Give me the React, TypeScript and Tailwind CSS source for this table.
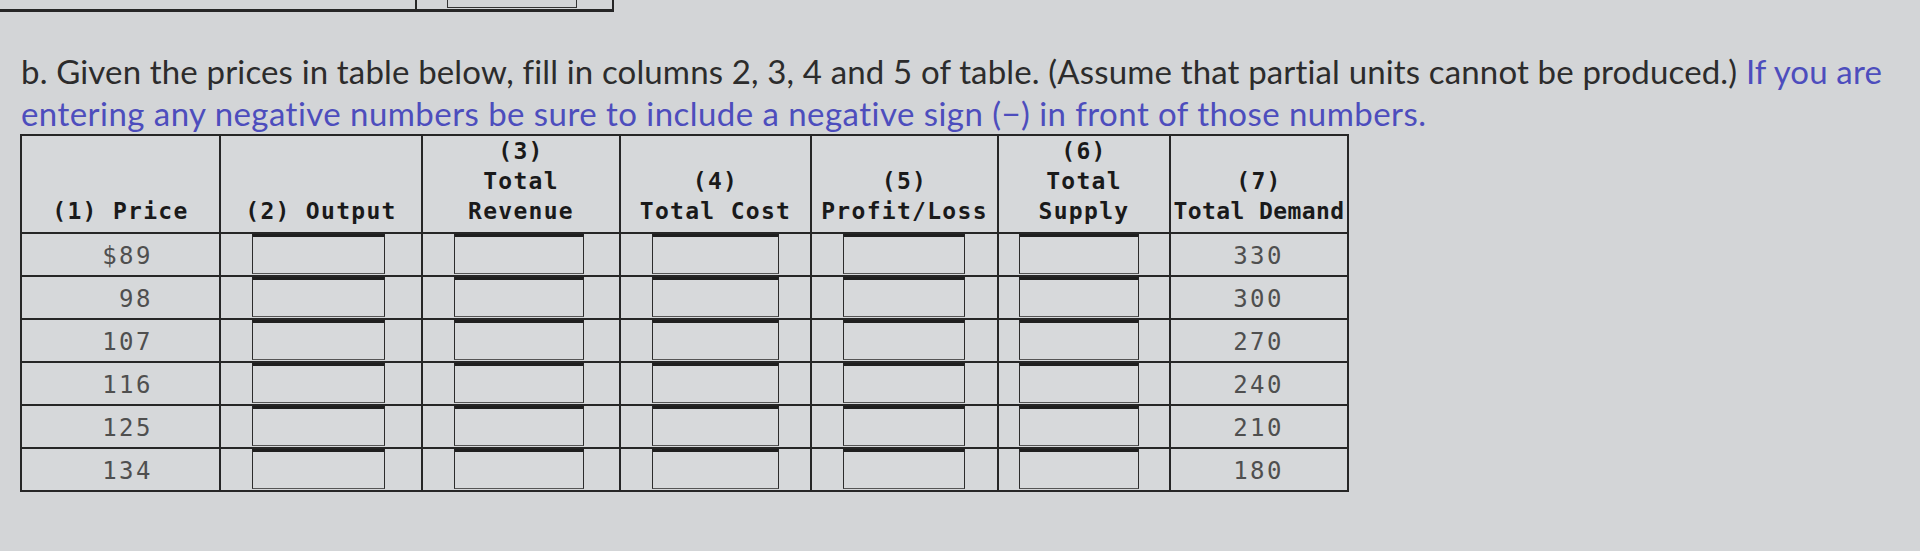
import React from "react";

const COLS = [199, 202, 198, 191, 187, 172, 178];
const BOX: { left: number; width: number }[] = [
  { left: 0, width: 0 },
  { left: 31, width: 133 },
  { left: 31, width: 130 },
  { left: 31, width: 127 },
  { left: 31, width: 122 },
  { left: 20, width: 120 },
];

const prices = ["$89", "98", "107", "116", "125", "134"];
const demand = ["330", "300", "270", "240", "210", "180"];

const headers: string[][] = [
  ["(1) Price"],
  ["(2) Output"],
  ["(3)", "Total", "Revenue"],
  ["(4)", "Total Cost"],
  ["(5)", "Profit/Loss"],
  ["(6)", "Total", "Supply"],
  ["(7)", "Total Demand"],
];

const mono = { fontFamily: '"DejaVu Sans Mono", "Liberation Mono", monospace' };

function InputBox({ col }: { col: number }) {
  const b = BOX[col];
  return (
    <div
      className="h-[40px] border-t-[3px] border-x border-b border-t-[#1f1f1f] border-x-[#2c2c2c] border-b-[#555] bg-[#d7d9db]"
      style={{ marginLeft: b.left, width: b.width }}
    />
  );
}

export default function App() {
  return (
    <div className="min-h-[551px] w-full bg-[#d3d5d7] overflow-hidden">
      {/* remnant of previous table */}
      <div className="flex h-[12px]">
        <div className="w-[417px] border-r-2 border-b-[3px] border-[#262626]" />
        <div className="w-[197px] border-r-2 border-b-[3px] border-[#262626]">
          <div className="ml-[30px] h-[8px] w-[130px] border-x border-b border-[#333]" />
        </div>
      </div>

      <div
        className="pl-[21px] mt-[38px] text-[33px] leading-[42px] whitespace-nowrap"
        style={{ fontFamily: 'Lato, "Open Sans", sans-serif' }}
      >
        <div className="text-[#2c2c2c] tracking-[0.15px]">
          b. Given the prices in table below, fill in columns 2, 3, 4 and 5 of table. (Assume that
          partial units cannot be produced.){" "}
          <span className="text-[#4d4dbd]">If you are</span>
        </div>
        <div className="text-[#4d4dbd] tracking-[0.45px]">
          entering any negative numbers be sure to include a negative sign (−) in front of those
          numbers.
        </div>
      </div>

      <div className="ml-[20px] inline-block border-l-2 border-t-2 border-[#262626]" style={mono}>
        <div
          className="grid"
          style={{ gridTemplateColumns: COLS.map((c) => `${c}px`).join(" "), gridTemplateRows: "98px repeat(6, 43px)" }}
        >
          {headers.map((lines, i) => (
            <div
              key={"h" + i}
              className="flex flex-col items-center justify-end overflow-hidden border-r-2 border-b-2 border-[#262626] bg-[#d6d8da] pb-[6px] text-[23px] leading-[30px] font-bold text-[#1a1a1a] whitespace-nowrap"
            >
              {lines.map((l, j) => (
                <div key={j} className={l === "Total Demand" ? "tracking-[0.4px]" : "tracking-[1.3px]"}>
                  {l}
                </div>
              ))}
            </div>
          ))}
          {prices.map((p, r) => (
            <React.Fragment key={"r" + r}>
              <div className="flex items-center justify-end border-r-2 border-b-2 border-[#262626] bg-[#d6d8da] pr-[66px] pt-[3px] text-[24px] tracking-[2.5px] text-[#4f4f4f]">
                {p}
              </div>
              {[1, 2, 3, 4, 5].map((c) => (
                <div key={c} className="border-r-2 border-b-2 border-[#262626] bg-[#d6d8da]">
                  <InputBox col={c} />
                </div>
              ))}
              <div className="flex items-center justify-end border-r-2 border-b-2 border-[#262626] bg-[#d6d8da] pr-[63px] pt-[3px] text-[24px] tracking-[2.5px] text-[#4f4f4f]">
                {demand[r]}
              </div>
            </React.Fragment>
          ))}
        </div>
      </div>
    </div>
  );
}
